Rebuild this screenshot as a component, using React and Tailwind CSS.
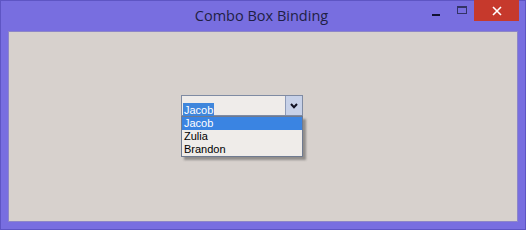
export default function App() {
  const items = ["Jacob", "Zulia", "Brandon"];
  return (
    <div className="w-[526px] h-[230px] bg-[#786ee0] border border-[#5e55c4] flex flex-col" style={{ fontFamily: '"Liberation Sans", Arial, sans-serif' }}>
      <div className="h-[30px] grid grid-cols-[1fr_auto_1fr] items-start shrink-0">
        <div />
        <div className="pt-[5px] pr-[3px] leading-[20px] text-[#1f1f45]" style={{ fontFamily: '"Open Sans", "Noto Sans", sans-serif', fontSize: '14.5px' }}>
          Combo Box Binding
        </div>
        <div className="flex justify-end items-start">
          <div className="w-[26px] h-[20px] flex items-center justify-center">
            <div className="w-[8px] h-[2px] bg-[#111133] mt-[8px]" />
          </div>
          <div className="w-[25px] h-[20px] flex items-center justify-center">
            <div className="w-[10px] h-[8px] border border-[#333366] border-t-2 -mt-[3px]" />
          </div>
          <div className="w-[45px] h-[21px] bg-[#c6392c] flex items-center justify-center mr-[6px] -mt-px">
            <svg width="10" height="10" viewBox="0 0 10 10">
              <path d="M1 1 L9 9 M9 1 L1 9" stroke="#ffffff" strokeWidth="1.6" />
            </svg>
          </div>
        </div>
      </div>
      <div className="flex-1 mx-[7px] mb-[7px] bg-[#d7d1cd] border border-[#8d86c8] pl-[172px] pt-[63px]">
        <div className="relative w-[122px]">
          <div className="h-[21px] flex border border-[#7f8ba3] bg-[#efecea]">
            <div className="flex-1 pl-px pt-px">
              <span className="inline-block bg-[#3f86dc] text-white text-[11px] leading-[14px] px-px">Jacob</span>
            </div>
            <div className="w-[17px] bg-[#c7d1e8] border-l border-[#8e9bb8] flex items-center justify-center">
              <svg width="8" height="6" viewBox="0 0 8 6">
                <path d="M1 1 L4 4.2 L7 1" stroke="#111122" strokeWidth="2" fill="none" />
              </svg>
            </div>
          </div>
          <div className="absolute left-0 top-[21px] w-[122px] border border-[#6f7a90] bg-[#efece9] shadow-[3px_3px_2px_rgba(60,60,60,0.45)]">
            {items.map((t, i) => (
              <div
                key={t}
                className={
                  i === 0
                    ? "h-[13px] bg-[#3a84e2] text-white text-[11px] leading-[13px] pl-[2px]"
                    : "h-[13px] text-[#000000] text-[11px] leading-[13px] pl-[2px]"
                }
              >
                {t}
              </div>
            ))}
          </div>
        </div>
      </div>
    </div>
  );
}
